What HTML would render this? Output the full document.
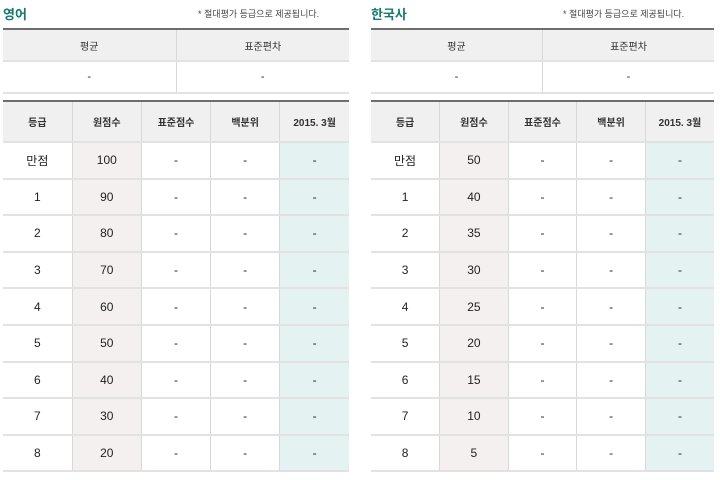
<!DOCTYPE html>
<html><head><meta charset="utf-8"><style>
*{margin:0;padding:0;box-sizing:border-box}
body{width:720px;height:480px;background:#fff;font-family:"Liberation Sans","Noto Sans CJK KR",sans-serif;position:relative;overflow:hidden;color:#222}
.t{position:absolute;top:4px;font-size:13px;font-weight:bold;color:#167a6c}
.n{position:absolute;top:7px;font-size:9px;color:#444}
table{position:absolute;border-collapse:collapse;table-layout:fixed;font-size:12px;text-align:center}
td,th{border-bottom:2px solid #e2e2e2;border-left:1px solid #d8d8d8;padding:0;vertical-align:middle}
td:first-child,th:first-child{border-left:none}
th{font-weight:bold;font-size:10px;background:#f0f0f0;color:#333}
.a th{font-weight:normal}
.a td{font-size:11px}
table{border-top:2px solid #6e6e6e}
.b td:nth-child(2){background:#f4f0f0}
.b td:nth-child(5){background:#e4f2f2}
.a td,.a th{height:32px}
.b th{height:41px}
.b td{height:36.6px}
</style></head><body>
<div class="t" style="left:3px">영어</div>
<div class="n" style="left:198px">* 절대평가 등급으로 제공됩니다.</div>
<div class="t" style="left:371px">한국사</div>
<div class="n" style="left:563px">* 절대평가 등급으로 제공됩니다.</div>

<table class="a" style="left:3px;top:28px;width:346px"><tr><th>평균</th><th>표준편차</th></tr><tr><td>-</td><td>-</td></tr></table>
<table class="a" style="left:371px;top:28px;width:343px"><tr><th>평균</th><th>표준편차</th></tr><tr><td>-</td><td>-</td></tr></table>

<table class="b" style="left:3px;top:100px;width:346px">
<tr><th>등급</th><th>원점수</th><th>표준점수</th><th>백분위</th><th>2015. 3월</th></tr>
<tr><td>만점</td><td>100</td><td>-</td><td>-</td><td>-</td></tr>
<tr><td>1</td><td>90</td><td>-</td><td>-</td><td>-</td></tr>
<tr><td>2</td><td>80</td><td>-</td><td>-</td><td>-</td></tr>
<tr><td>3</td><td>70</td><td>-</td><td>-</td><td>-</td></tr>
<tr><td>4</td><td>60</td><td>-</td><td>-</td><td>-</td></tr>
<tr><td>5</td><td>50</td><td>-</td><td>-</td><td>-</td></tr>
<tr><td>6</td><td>40</td><td>-</td><td>-</td><td>-</td></tr>
<tr><td>7</td><td>30</td><td>-</td><td>-</td><td>-</td></tr>
<tr><td>8</td><td>20</td><td>-</td><td>-</td><td>-</td></tr>
</table>
<table class="b" style="left:371px;top:100px;width:343px">
<tr><th>등급</th><th>원점수</th><th>표준점수</th><th>백분위</th><th>2015. 3월</th></tr>
<tr><td>만점</td><td>50</td><td>-</td><td>-</td><td>-</td></tr>
<tr><td>1</td><td>40</td><td>-</td><td>-</td><td>-</td></tr>
<tr><td>2</td><td>35</td><td>-</td><td>-</td><td>-</td></tr>
<tr><td>3</td><td>30</td><td>-</td><td>-</td><td>-</td></tr>
<tr><td>4</td><td>25</td><td>-</td><td>-</td><td>-</td></tr>
<tr><td>5</td><td>20</td><td>-</td><td>-</td><td>-</td></tr>
<tr><td>6</td><td>15</td><td>-</td><td>-</td><td>-</td></tr>
<tr><td>7</td><td>10</td><td>-</td><td>-</td><td>-</td></tr>
<tr><td>8</td><td>5</td><td>-</td><td>-</td><td>-</td></tr>
</table>
</body></html>
